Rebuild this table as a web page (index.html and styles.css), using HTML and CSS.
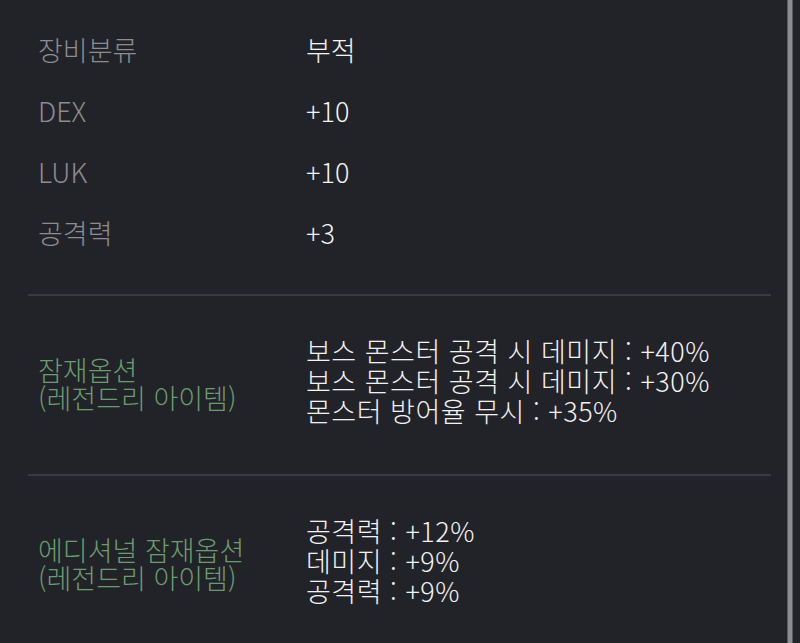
FILE: index.html
```html
<!DOCTYPE html>
<html lang="ko">
<head>
    <meta charset="UTF-8">
    <meta name="viewport" content="width=device-width, initial-scale=1.0">
    <title>아이템 정보</title>
    <link rel="stylesheet" href="styles.css">
</head>
<body>
    <div class="item-info">
        <div class="stat-list">
            <div class="stat-row">
                <div class="stat-name">장비분류</div>
                <div class="stat-value">부적</div>
            </div>
            <div class="stat-row">
                <div class="stat-name">DEX</div>
                <div class="stat-value">+10</div>
            </div>
            <div class="stat-row">
                <div class="stat-name">LUK</div>
                <div class="stat-value">+10</div>
            </div>
            <div class="stat-row">
                <div class="stat-name">공격력</div>
                <div class="stat-value">+3</div>
            </div>
        </div>

        <div class="option-section">
            <div class="option-title">잠재옵션<br>(레전드리 아이템)</div>
            <div class="option-lines">
                <div>보스 몬스터 공격 시 데미지 : +40%</div>
                <div>보스 몬스터 공격 시 데미지 : +30%</div>
                <div>몬스터 방어율 무시 : +35%</div>
            </div>
        </div>

        <div class="option-section">
            <div class="option-title">에디셔널 잠재옵션<br>(레전드리 아이템)</div>
            <div class="option-lines">
                <div>공격력 : +12%</div>
                <div>데미지 : +9%</div>
                <div>공격력 : +9%</div>
            </div>
        </div>
    </div>
    <div class="scroll-track"></div>
</body>
</html>
```

FILE: styles.css
```css
html, body {
    height: 100%;
}
body {
    margin: 0;
    display: flex;
    background: #222328;
    color: #f2f2f2;
    font-family: 'Noto Sans CJK KR', 'Noto Sans', sans-serif;
    font-weight: 300;
    font-size: 27px;
    overflow: hidden;
}
.item-info {
    flex: 1;
    padding: 0 16px 0 28px;
}
.stat-list {
    padding: 19px 0 31px;
}
.stat-row {
    display: flex;
    align-items: center;
    height: 61px;
    padding-left: 10px;
}
.stat-name {
    width: 268px;
    color: #8c8c92;
}
.stat-value {
    color: #f4f4f4;
}
.option-section {
    display: flex;
    align-items: center;
    border-top: 2px solid #3a3a42;
    padding: 40px 0 48px 10px;
}
.option-title {
    width: 268px;
    padding-top: 6px;
    color: #6b9c70;
    line-height: 28px;
}
.option-lines {
    line-height: 30px;
    letter-spacing: 0.5px;
}
.scroll-track {
    width: 6px;
    margin-right: 7px;
    background: #8d8d91;
    border-left: 1px solid #5a5a5e;
    border-right: 1px solid #5a5a5e;
    box-sizing: border-box;
}
```
